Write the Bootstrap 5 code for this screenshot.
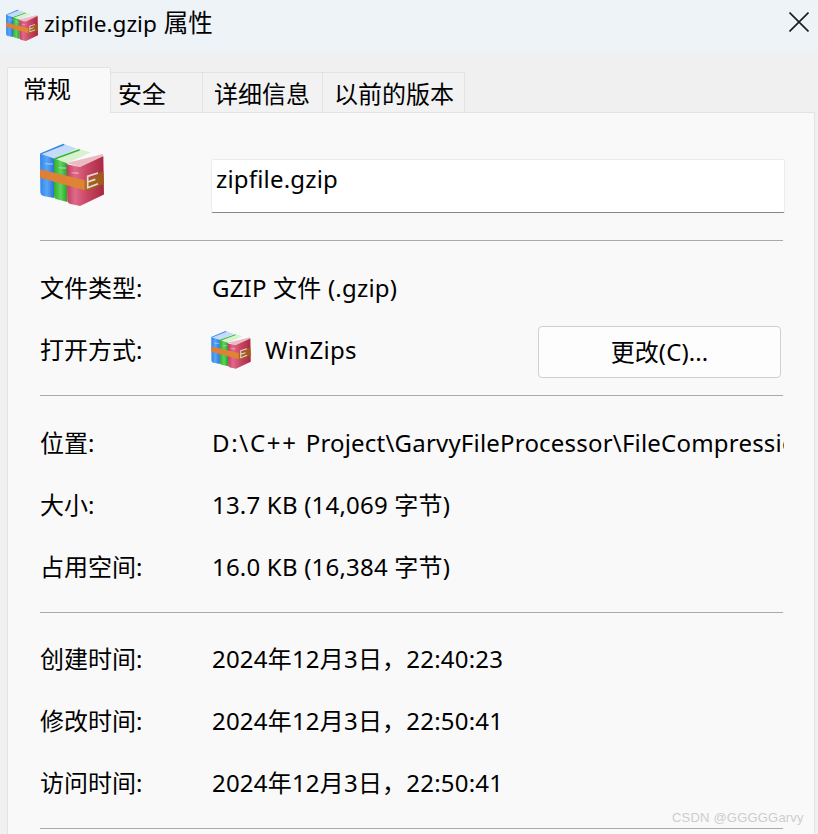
<!DOCTYPE html>
<html lang="zh-CN">
<head>
<meta charset="utf-8">
<title>zipfile.gzip 属性</title>
<link href="https://cdn.jsdelivr.net/npm/bootstrap@5.3.0/dist/css/bootstrap.min.css" rel="stylesheet">
<style>
html,body{height:100%;overflow:hidden}
body{background:#f0f0f0;color:#000;font-family:"Noto Sans","Noto Sans CJK SC",sans-serif;font-size:24px;line-height:32px}
.win-title{height:51px;background:#eef3f8;padding:0 0 0 5px}
.win-title .ttl{margin-left:5px;margin-top:-5px;font-size:22.6px}
.ttl-cjk{font-size:24.5px;margin-left:1px}
.win-close{width:20px;height:20px;margin-right:9px;margin-top:-7px}
.tab-strip{padding:16px 0 0 7px;height:62px;border:0;flex-wrap:nowrap;margin:0}
.tab-strip .nav-link{background:#f2f2f2;color:#000;border:1px solid #e3e3e3;border-bottom:0;border-left:0;border-radius:0;height:40px;margin-top:5px;padding:5px 0 0;font-size:24px;line-height:32px}
.tab-strip .nav-link.active{background:#f9f9f9;color:#000;height:46px;margin-top:0;width:104px;padding:5px 0 0 15px;border:1px solid #e3e3e3;border-bottom:0;border-radius:2px 2px 0 0;position:relative;z-index:2}
.tab-b{width:92px;padding-left:7px!important}
.tab-c{width:120px;padding-left:11px!important}
.tab-d{width:142px;padding-left:11px!important}
.sheet{background:#f9f9f9;margin:-1px 3px 0 7px;height:722px;overflow:hidden;padding:0 30px 0 32px;border:1px solid #e3e3e3;border-bottom:0;position:relative}
.head-row{height:127px;padding-top:29px}
.big-ico{width:68px;height:66px;margin-left:-2px}
.name-box{width:574px;height:54px;margin:17px 0 0 105px;background:#fff;border:1px solid #ececec;border-bottom:1px solid #868686;border-radius:2px;padding:3px 4px;font-size:24px;line-height:32px;color:#000;letter-spacing:.18px}
.sep{height:1px;background:#a9a9a9;opacity:1;border:0;margin:0 1px 0 0}
.gap-a{margin-bottom:16px}
.gap-b{margin-bottom:15px}
.sect{padding-bottom:14px}
.prop{display:grid;grid-template-columns:172px 1fr;height:62px;align-items:center}
.prop-lbl{margin-top:-1px}
.prop-val{white-space:nowrap;overflow:hidden;letter-spacing:.2px;margin-top:-1px}
.path-head{letter-spacing:1.7px}
.app-name{letter-spacing:.35px}
.app-ico{width:42px;height:40px;margin:0 13px 0 -2px}
.chg-btn{width:243px;height:52px;margin-left:auto;margin-right:3px;margin-top:4px;background:#fdfdfd;border:1px solid #d0d0d0;border-radius:4px;color:#000;font-size:24px;line-height:32px;padding:0;letter-spacing:.1px}
.mark-csdn{position:absolute;left:664px;top:697px;font-size:13px;line-height:16px;color:#cdcdcd;letter-spacing:.2px;font-family:"Liberation Sans",sans-serif;white-space:nowrap}
</style>
</head>
<body>
<svg width="0" height="0" class="position-absolute">
<defs>
<linearGradient id="gb" x1="0" x2="1" y1="0" y2="0"><stop offset="0" stop-color="#2f86ee"/><stop offset=".5" stop-color="#58a6f5"/><stop offset="1" stop-color="#2a73d6"/></linearGradient>
<linearGradient id="gg" x1="0" x2="1" y1="0" y2="0"><stop offset="0" stop-color="#2fae2f"/><stop offset=".5" stop-color="#5fd35a"/><stop offset="1" stop-color="#27a02b"/></linearGradient>
<linearGradient id="gr" x1="0" x2="1" y1="0" y2="0"><stop offset="0" stop-color="#c23a60"/><stop offset=".22" stop-color="#de6a88"/><stop offset=".5" stop-color="#cc4a6a"/><stop offset="1" stop-color="#a8283f"/></linearGradient>
<linearGradient id="go" x1="0" x2="1" y1="0" y2="0"><stop offset="0" stop-color="#dd7f36"/><stop offset=".68" stop-color="#e08434"/><stop offset=".72" stop-color="#a7601f"/><stop offset="1" stop-color="#a05a1e"/></linearGradient>
<symbol id="rar" viewBox="24 22 204 196" preserveAspectRatio="none">
<path d="M30 56 100 27 142 42 70 72Z" fill="#c4dcf8"/>
<path d="M30 56 100 27 104 31 36 58Z" fill="#3a86e4"/>
<path d="M30 56 72 71 72 188 40 182Q31 180 31 170Z" fill="url(#gb)"/>
<path d="M72 70 148 43 182 53 110 86Z" fill="#d8f2d0"/>
<path d="M72 70 148 43 150 47 78 73Z" fill="#3cb53c"/>
<path d="M72 70 112 86 112 200 80 192Q72 190 72 180Z" fill="url(#gg)"/>
<path d="M110 84 218 58 220 68 150 96Z" fill="#eeb9c6"/>
<path d="M110 88 150 96 220 64 222 178 150 212 122 206Q112 203 112 194Z" fill="url(#gr)"/>
<path d="M44 85h24v5l-24-2zM86 97h22v5l-22-2zM124 112h22v5l-22-2z" fill="#fff" opacity=".4"/>
<path d="M30 103 168 136 220 108 222 147 170 167 30 128Z" fill="url(#go)"/>
<path d="M172 124 204 114M173 122 173 158 204 146M173 141 196 133" stroke="#e4ded6" stroke-width="5" fill="none"/>
</symbol>
</defs>
</svg>

<header class="win-title d-flex align-items-center">
  <svg class="flex-shrink-0" width="34" height="33"><use href="#rar"/></svg>
  <span class="ttl flex-grow-1">zipfile.gzip <span class="ttl-cjk">属性</span></span>
  <svg class="win-close" viewBox="0 0 20 20"><path d="M.5.5 19.5 19.5M19.5.5.5 19.5" stroke="#1b1b1b" stroke-width="1.6" fill="none"/></svg>
</header>

<ul class="nav nav-tabs tab-strip">
  <li class="nav-item"><a class="nav-link active" href="#">常规</a></li>
  <li class="nav-item"><a class="nav-link tab-b" href="#">安全</a></li>
  <li class="nav-item"><a class="nav-link tab-c" href="#">详细信息</a></li>
  <li class="nav-item"><a class="nav-link tab-d" href="#">以前的版本</a></li>
</ul>

<main class="sheet">
  <div class="head-row d-flex align-items-start">
    <svg class="big-ico flex-shrink-0"><use href="#rar"/></svg>
    <div class="name-box flex-shrink-0">zipfile.gzip</div>
  </div>
  <hr class="sep gap-a">
  <section class="sect">
    <div class="prop"><div class="prop-lbl">文件类型:</div><div class="prop-val">GZIP 文件 (.gzip)</div></div>
    <div class="prop"><div>打开方式:</div><div class="d-flex align-items-center">
      <svg class="app-ico flex-shrink-0"><use href="#rar"/></svg><span class="app-name">WinZips</span>
      <button type="button" class="btn chg-btn">更改(C)...</button></div></div>
  </section>
  <hr class="sep gap-a">
  <section class="sect">
    <div class="prop"><div>位置:</div><div class="prop-val"><span class="path-head">D:\C++ </span>Project\GarvyFileProcessor\FileCompression</div></div>
    <div class="prop"><div>大小:</div><div class="prop-val">13.7 KB (14,069 字节)</div></div>
    <div class="prop"><div class="prop-lbl">占用空间:</div><div class="prop-val">16.0 KB (16,384 字节)</div></div>
  </section>
  <hr class="sep gap-b">
  <section class="sect">
    <div class="prop"><div>创建时间:</div><div class="prop-val">2024年12月3日，22:40:23</div></div>
    <div class="prop"><div>修改时间:</div><div class="prop-val">2024年12月3日，22:50:41</div></div>
    <div class="prop"><div>访问时间:</div><div class="prop-val">2024年12月3日，22:50:41</div></div>
  </section>
  <hr class="sep">
  <div class="mark-csdn">CSDN @GGGGGarvy</div>
</main>
</body>
</html>
